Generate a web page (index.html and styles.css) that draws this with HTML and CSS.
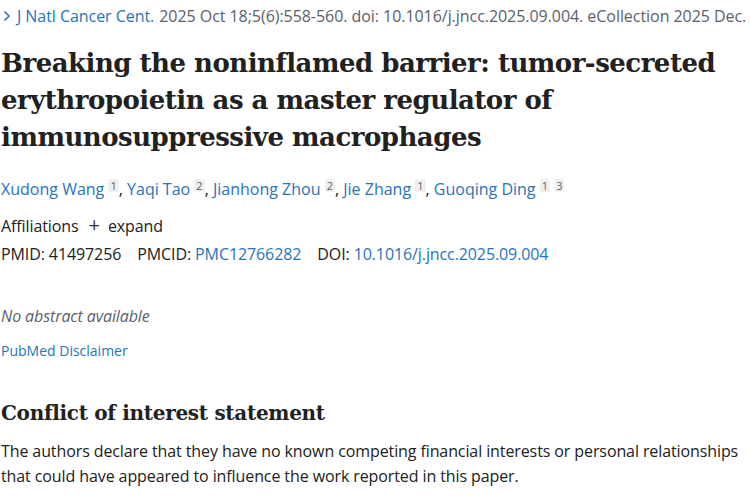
FILE: index.html
```html
<!DOCTYPE html>
<html>
<head>
<meta charset="utf-8">
<link rel="stylesheet" href="styles.css">
</head>
<body>
<main class="article">
  <div class="cit">
    <svg class="chev" width="10" height="12" viewBox="0 0 10 12"><path d="M2.5 1.5 L7 6 L2.5 10.5" fill="none" stroke="#2774ba" stroke-width="1.6"/></svg>
    <a class="link" href="#">J Natl Cancer Cent.</a> 2025 Oct 18;5(6):558-560. doi: 10.1016/j.jncc.2025.09.004. eCollection 2025 Dec.
  </div>
  <h1 class="title">Breaking the noninflamed barrier: tumor-secreted erythropoietin as a master regulator of immunosuppressive macrophages</h1>
  <div class="authors">
    <a class="link" href="#">Xudong Wang</a> <sup class="ref">1</sup>, <a class="link" href="#">Yaqi Tao</a> <sup class="ref">2</sup>, <a class="link" href="#">Jianhong Zhou</a> <sup class="ref">2</sup>, <a class="link" href="#">Jie Zhang</a> <sup class="ref">1</sup>, <a class="link" href="#">Guoqing Ding</a> <sup class="ref">1</sup> <sup class="ref">3</sup>
  </div>
  <div class="affil">Affiliations <span class="plus">+</span> expand</div>
  <div class="ids">
    <span class="id">PMID: 41497256</span>
    <span class="id">PMCID: <a class="link" href="#">PMC12766282</a></span>
    <span class="id">DOI: <a class="link" href="#">10.1016/j.jncc.2025.09.004</a></span>
  </div>
  <p class="noabs">No abstract available</p>
  <a class="link disc" href="#">PubMed Disclaimer</a>
  <h2 class="sub">Conflict of interest statement</h2>
  <p class="para">The authors declare that they have no known competing financial interests or personal relationships that could have appeared to influence the work reported in this paper.</p>
</main>
</body>
</html>
```
FILE: styles.css
```css
html, body { margin: 0; padding: 0; background: #fff; }
body { font-family: "Open Sans", "Noto Sans", sans-serif; color: #212121; }
.article { padding: 0 0 0 1px; }
.link { color: #2774ba; text-decoration: none; }
.cit { font-size: 16px; line-height: 20px; padding-top: 6px; color: #5b616b; display: flex; align-items: center; white-space: nowrap; letter-spacing: -0.05px; }
.cit .link { margin: 0 5px 0 5px; }
.chev { flex: none; margin-left: 1px; }
.title { font-family: "DejaVu Serif", serif; font-weight: bold; font-size: 26px; line-height: 37px; margin: 19px 0 0 0; color: #212121; letter-spacing: -0.5px; }
.authors { font-size: 16px; line-height: 24px; margin-top: 21px; letter-spacing: 0; }
.ref { font-size: 11px; background: #efefef; color: #5b616b; padding: 0 2px; border-radius: 2px; vertical-align: 5px; line-height: 13px; display: inline-block; letter-spacing: 0; }
.affil { font-size: 16px; line-height: 24px; margin-top: 12px; letter-spacing: -0.1px; }
.plus { font-size: 20px; margin: 0 4px 0 6px; color: #333; }
.ids { font-size: 16px; line-height: 24px; margin-top: 4px; display: flex; gap: 16px; letter-spacing: -0.1px; }
.noabs { font-style: italic; color: #5b616b; font-size: 16px; line-height: 24px; margin: 38px 0 0 0; letter-spacing: -0.1px; }
.disc { display: block; font-size: 14px; line-height: 20px; margin-top: 13px; }
.sub { font-family: "DejaVu Serif", serif; font-weight: bold; font-size: 20px; line-height: 28px; margin: 38px 0 0 0; color: #212121; letter-spacing: -0.3px; }
.para { font-size: 16px; line-height: 25px; margin: 12px 0 0 0; letter-spacing: -0.1px; }
```
